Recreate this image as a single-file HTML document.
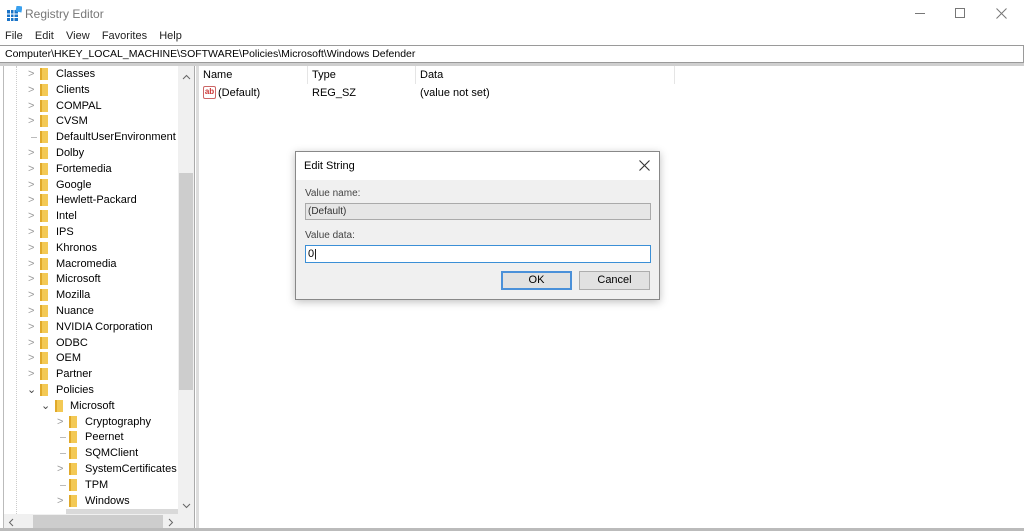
<!DOCTYPE html>
<html><head><meta charset="utf-8"><style>
*{margin:0;padding:0;box-sizing:border-box}
body{width:1024px;height:531px;background:#fff;font-family:"Liberation Sans",sans-serif;font-size:11px;color:#000;position:relative;overflow:hidden}
.a{position:absolute;white-space:nowrap}
.row{position:absolute;height:16px;line-height:16px;white-space:nowrap}
.f{position:absolute;width:8px;height:12px;background:#f3c955;top:2px;border-left:2px solid #e0a92a}
.ar{position:absolute;top:0;color:#999;font-size:11px}
.ln{position:absolute;top:8px;width:6px;border-top:1px solid #bbb}
</style></head><body>
<svg class="a" style="left:6px;top:6px" width="16" height="16" viewBox="0 0 16 16"><rect x="1" y="4" width="11" height="11" fill="#1a73c7"/><g stroke="#fff" stroke-width="1"><line x1="1" y1="8" x2="12" y2="8"/><line x1="1" y1="11.5" x2="12" y2="11.5"/><line x1="4.5" y1="4" x2="4.5" y2="15"/><line x1="8" y1="4" x2="8" y2="15"/></g><rect x="10" y="0" width="6" height="6" fill="#3aa0ee" transform="rotate(10 13 3)"/></svg>
<div class="a" style="left:25px;top:7px;font-size:12px;color:#777">Registry Editor</div>
<div class="a" style="left:915px;top:13px;width:10px;border-top:1px solid #777"></div>
<div class="a" style="left:955px;top:8px;width:10px;height:10px;border:1px solid #777"></div>
<svg class="a" style="left:996px;top:8px" width="11" height="11"><path d="M0.5 0.5L10.5 10.5M10.5 0.5L0.5 10.5" stroke="#777" stroke-width="1"/></svg>
<div class="a" style="left:5px;top:30px;font-size:11px;color:#222;word-spacing:1px">File&nbsp;&nbsp; Edit&nbsp;&nbsp; View&nbsp;&nbsp; Favorites&nbsp;&nbsp; Help</div>
<div class="a" style="left:0;top:45px;width:1024px;height:18px;border:1px solid #9a9a9a;border-left:none"></div>
<div class="a" style="left:5px;top:48px;font-size:10.5px">Computer\HKEY_LOCAL_MACHINE\SOFTWARE\Policies\Microsoft\Windows Defender</div>
<div class="a" style="left:0;top:63px;width:1024px;height:3px;background:#cfcfcf"></div>
<div class="a" style="left:3px;top:66px;width:192px;height:465px;border-left:1px solid #bbb;border-right:1px solid #aaa"></div>
<div class="a" style="left:16px;top:66px;height:448px;border-left:1px dotted #ccc"></div>
<div class="a" style="left:178px;top:66px;width:16px;height:448px;background:#f0f0f0"></div>
<div class="a" style="left:179px;top:173px;width:14px;height:217px;background:#cdcdcd"></div>
<svg class="a" style="left:182px;top:74px" width="9" height="6"><path d="M1 5L4.5 1.5L8 5" stroke="#666" fill="none"/></svg>
<svg class="a" style="left:182px;top:503px" width="9" height="6"><path d="M1 1L4.5 4.5L8 1" stroke="#666" fill="none"/></svg>
<div class="a" style="left:4px;top:514px;width:190px;height:17px;background:#f0f0f0"></div>
<div class="a" style="left:33px;top:515px;width:130px;height:14px;background:#cdcdcd"></div>
<svg class="a" style="left:8px;top:518px" width="6" height="9"><path d="M5 1L1.5 4.5L5 8" stroke="#666" fill="none"/></svg>
<svg class="a" style="left:168px;top:518px" width="6" height="9"><path d="M1 1L4.5 4.5L1 8" stroke="#666" fill="none"/></svg>
<div class="a" style="left:196px;top:66px;width:3px;height:465px;background:#ddd"></div>
<div class="a" style="left:0;top:528px;width:1024px;height:3px;background:#bbb"></div>

<div style="position:absolute;left:0;top:66px;font-size:11px">
<div class="row" style="top:0"><span class="ar" style="left:28px">&gt;</span><span class="f" style="left:40px"></span><span class="a" style="left:56px">Classes</span></div>
<div class="row" style="top:15.8px"><span class="ar" style="left:28px">&gt;</span><span class="f" style="left:40px"></span><span class="a" style="left:56px">Clients</span></div>
<div class="row" style="top:31.6px"><span class="ar" style="left:28px">&gt;</span><span class="f" style="left:40px"></span><span class="a" style="left:56px">COMPAL</span></div>
<div class="row" style="top:47.4px"><span class="ar" style="left:28px">&gt;</span><span class="f" style="left:40px"></span><span class="a" style="left:56px">CVSM</span></div>
<div class="row" style="top:63.2px"><span class="ln" style="left:31px"></span><span class="f" style="left:40px"></span><span class="a" style="left:56px">DefaultUserEnvironment</span></div>
<div class="row" style="top:79px"><span class="ar" style="left:28px">&gt;</span><span class="f" style="left:40px"></span><span class="a" style="left:56px">Dolby</span></div>
<div class="row" style="top:94.8px"><span class="ar" style="left:28px">&gt;</span><span class="f" style="left:40px"></span><span class="a" style="left:56px">Fortemedia</span></div>
<div class="row" style="top:110.6px"><span class="ar" style="left:28px">&gt;</span><span class="f" style="left:40px"></span><span class="a" style="left:56px">Google</span></div>
<div class="row" style="top:126.4px"><span class="ar" style="left:28px">&gt;</span><span class="f" style="left:40px"></span><span class="a" style="left:56px">Hewlett-Packard</span></div>
<div class="row" style="top:142.2px"><span class="ar" style="left:28px">&gt;</span><span class="f" style="left:40px"></span><span class="a" style="left:56px">Intel</span></div>
<div class="row" style="top:158px"><span class="ar" style="left:28px">&gt;</span><span class="f" style="left:40px"></span><span class="a" style="left:56px">IPS</span></div>
<div class="row" style="top:173.8px"><span class="ar" style="left:28px">&gt;</span><span class="f" style="left:40px"></span><span class="a" style="left:56px">Khronos</span></div>
<div class="row" style="top:189.6px"><span class="ar" style="left:28px">&gt;</span><span class="f" style="left:40px"></span><span class="a" style="left:56px">Macromedia</span></div>
<div class="row" style="top:205.4px"><span class="ar" style="left:28px">&gt;</span><span class="f" style="left:40px"></span><span class="a" style="left:56px">Microsoft</span></div>
<div class="row" style="top:221.2px"><span class="ar" style="left:28px">&gt;</span><span class="f" style="left:40px"></span><span class="a" style="left:56px">Mozilla</span></div>
<div class="row" style="top:237px"><span class="ar" style="left:28px">&gt;</span><span class="f" style="left:40px"></span><span class="a" style="left:56px">Nuance</span></div>
<div class="row" style="top:252.8px"><span class="ar" style="left:28px">&gt;</span><span class="f" style="left:40px"></span><span class="a" style="left:56px">NVIDIA Corporation</span></div>
<div class="row" style="top:268.6px"><span class="ar" style="left:28px">&gt;</span><span class="f" style="left:40px"></span><span class="a" style="left:56px">ODBC</span></div>
<div class="row" style="top:284.4px"><span class="ar" style="left:28px">&gt;</span><span class="f" style="left:40px"></span><span class="a" style="left:56px">OEM</span></div>
<div class="row" style="top:300.2px"><span class="ar" style="left:28px">&gt;</span><span class="f" style="left:40px"></span><span class="a" style="left:56px">Partner</span></div>
<div class="row" style="top:316px"><span class="ar" style="left:27px;color:#444">&#8964;</span><span class="f" style="left:40px"></span><span class="a" style="left:56px">Policies</span></div>
<div class="row" style="top:331.8px"><span class="ar" style="left:41px;color:#444">&#8964;</span><span class="f" style="left:55px"></span><span class="a" style="left:70px">Microsoft</span></div>
<div class="row" style="top:347.6px"><span class="ar" style="left:57px">&gt;</span><span class="f" style="left:69px"></span><span class="a" style="left:85px">Cryptography</span></div>
<div class="row" style="top:363.4px"><span class="ln" style="left:60px"></span><span class="f" style="left:69px"></span><span class="a" style="left:85px">Peernet</span></div>
<div class="row" style="top:379.2px"><span class="ln" style="left:60px"></span><span class="f" style="left:69px"></span><span class="a" style="left:85px">SQMClient</span></div>
<div class="row" style="top:395px"><span class="ar" style="left:57px">&gt;</span><span class="f" style="left:69px"></span><span class="a" style="left:85px">SystemCertificates</span></div>
<div class="row" style="top:410.8px"><span class="ln" style="left:60px"></span><span class="f" style="left:69px"></span><span class="a" style="left:85px">TPM</span></div>
<div class="row" style="top:426.6px"><span class="ar" style="left:57px">&gt;</span><span class="f" style="left:69px"></span><span class="a" style="left:85px">Windows</span></div>
</div>
<div class="a" style="left:66px;top:509px;width:112px;height:5px;background:#d9d9d9"></div>
<div class="a" style="left:203px;top:69px">Name</div>
<div class="a" style="left:307px;top:66px;height:18px;border-left:1px solid #e5e5e5"></div>
<div class="a" style="left:312px;top:69px">Type</div>
<div class="a" style="left:415px;top:66px;height:18px;border-left:1px solid #e5e5e5"></div>
<div class="a" style="left:420px;top:69px">Data</div>
<div class="a" style="left:674px;top:66px;height:18px;border-left:1px solid #e5e5e5"></div>
<div class="a" style="left:203px;top:86px;width:13px;height:13px;border:1px solid #c66;border-radius:2px;font-size:8px;color:#c33;line-height:10px;text-align:center;font-weight:bold">ab</div>
<div class="a" style="left:218px;top:87px">(Default)</div>
<div class="a" style="left:312px;top:87px">REG_SZ</div>
<div class="a" style="left:420px;top:87px">(value not set)</div>
<div class="a" style="left:295px;top:151px;width:365px;height:149px;background:#f0f0f0;border:1px solid #888;box-shadow:0 2px 8px rgba(0,0,0,.25)">
<div class="a" style="left:0;top:0;width:363px;height:28px;background:#fff"></div>
<div class="a" style="left:8px;top:8px;font-size:11px">Edit String</div>
<svg class="a" style="left:343px;top:8px" width="11" height="11"><path d="M0.5 0.5L10.5 10.5M10.5 0.5L0.5 10.5" stroke="#333" stroke-width="1.1"/></svg>
<div class="a" style="left:9px;top:36px;font-size:10px;color:#444">Value name:</div>
<div class="a" style="left:9px;top:51px;width:346px;height:17px;border:1px solid #aaa;background:#e6e6e6;font-size:10px;color:#333;padding:2px 2px;line-height:12px">(Default)</div>
<div class="a" style="left:9px;top:78px;font-size:10px;color:#444">Value data:</div>
<div class="a" style="left:9px;top:93px;width:346px;height:18px;border:1px solid #3b8fd6;background:#fff;font-size:11px;padding:2px 2px;line-height:13px">0|</div>
<div class="a" style="left:205px;top:119px;width:71px;height:19px;border:2px solid #4a90d9;background:#e1e1e1;text-align:center;line-height:15px;font-size:11px">OK</div>
<div class="a" style="left:283px;top:119px;width:71px;height:19px;border:1px solid #adadad;background:#e1e1e1;text-align:center;line-height:17px;font-size:11px">Cancel</div>
</div>
</body></html>
